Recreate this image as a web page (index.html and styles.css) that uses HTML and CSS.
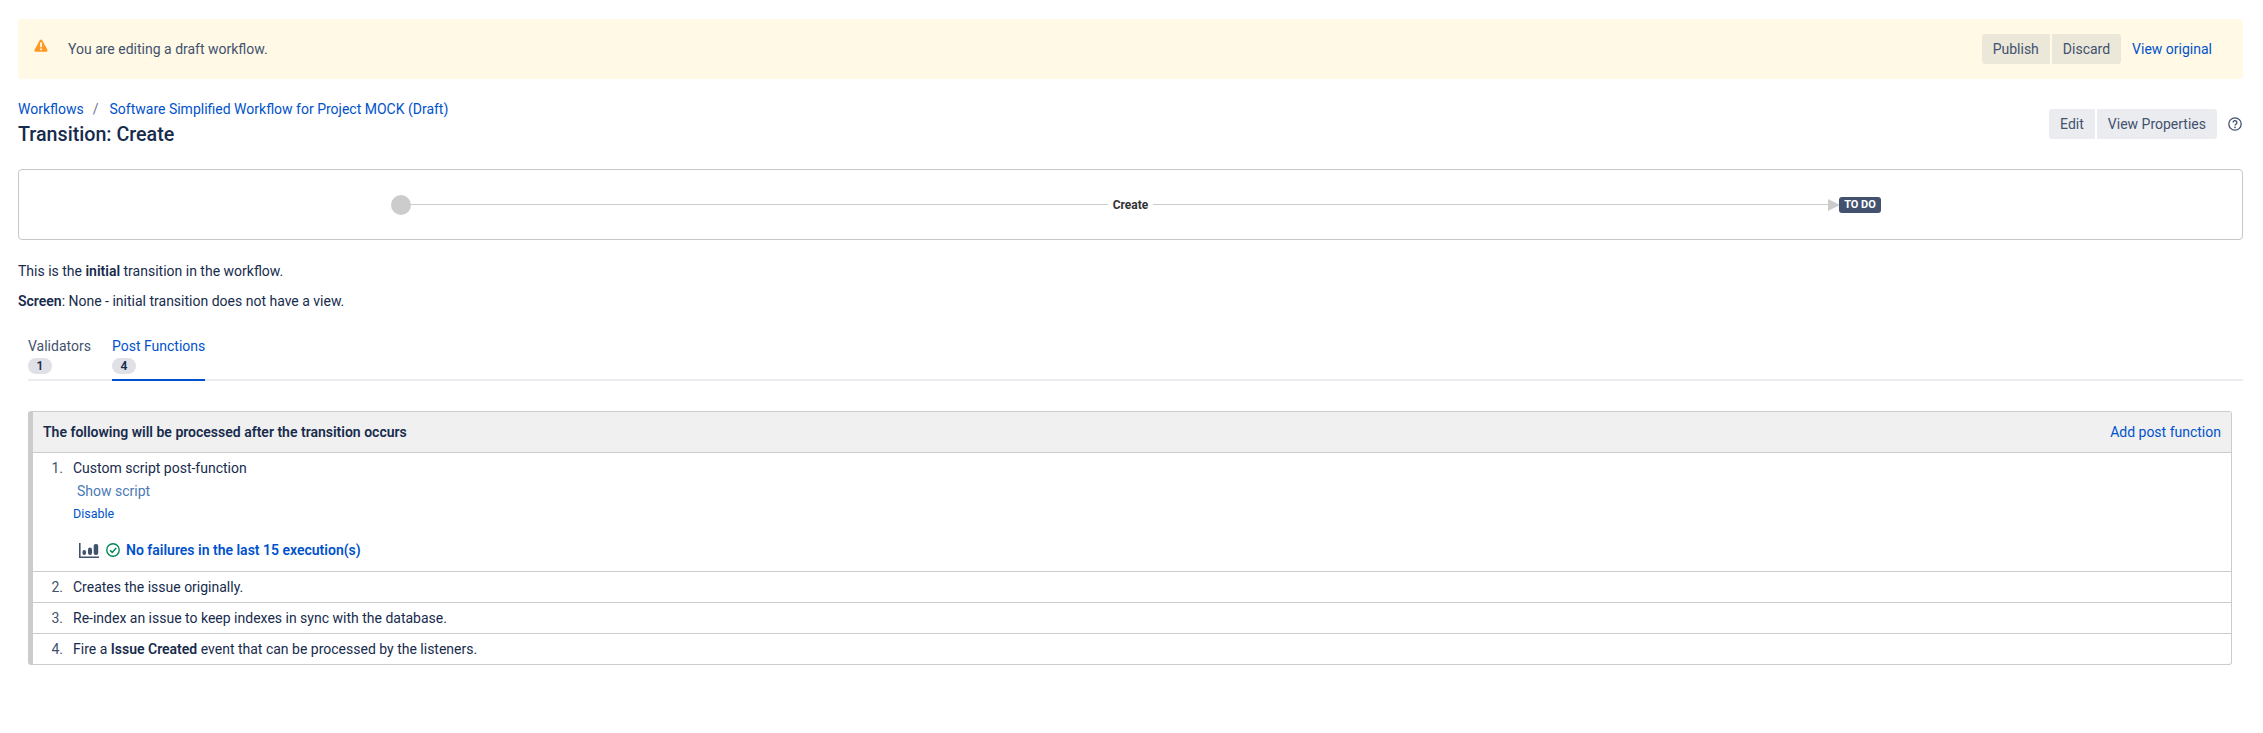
FILE: index.html
```html
<!DOCTYPE html>
<html lang="en">
<head>
<meta charset="utf-8">
<title>Transition: Create</title>
<link rel="stylesheet" href="styles.css">
</head>
<body>
<div class="banner">
  <svg class="warn-icon" width="14" height="13" viewBox="0 0 14 13"><path d="M5.9 1.1c.5-.9 1.700-.9 2.200 0l5.300 9.700c.5.9-.1 2-1.100 2H1.700c-1 0-1.600-1.100-1.100-2z" fill="#ff991f"/><rect x="6.100" y="3.300" width="1.800" height="5" rx=".9" fill="#fff"/><circle cx="7" cy="10.300" r="1" fill="#fff"/></svg>
  <span class="banner-text">You are editing a draft workflow.</span>
  <div class="btn-group banner-group">
    <a class="btn btn-warn">Publish</a>
    <a class="btn btn-warn">Discard</a>
  </div>
  <a class="link view-original">View original</a>
</div>

<div class="page-head">
  <div class="head-main">
    <div class="crumbs"><a class="link">Workflows</a><span class="sep">/</span><a class="link">Software Simplified Workflow for Project MOCK (Draft)</a></div>
    <h1 class="title">Transition: Create</h1>
  </div>
  <div class="btn-group head-group">
    <a class="btn">Edit</a>
    <a class="btn">View Properties</a>
  </div>
  <svg class="help-icon" width="14" height="14" viewBox="0 0 14 14"><circle cx="7" cy="7" r="6.200" fill="none" stroke="#42526e" stroke-width="1.300"/><path d="M5.100 5.500a1.900 1.900 0 1 1 2.900 1.600c-.7.400-1 .8-1 1.500" fill="none" stroke="#42526e" stroke-width="1.300"/><circle cx="7" cy="10.400" r=".8" fill="#42526e"/></svg>
</div>

<div class="diagram">
  <span class="node"></span>
  <span class="edge edge-a"></span>
  <span class="edge-label">Create</span>
  <span class="edge edge-b"></span>
  <span class="arrow"></span>
  <span class="status">TO DO</span>
</div>

<p class="info info-first">This is the <strong>initial</strong> transition in the workflow.</p>
<p class="info"><strong>Screen</strong>: None - initial transition does not have a view.</p>

<div class="tabs">
  <div class="tab"><span class="tab-name">Validators</span><span class="count">1</span></div>
  <div class="tab tab-active"><span class="tab-name">Post Functions</span><span class="count">4</span></div>
</div>

<div class="panel">
  <div class="panel-head">
    <strong>The following will be processed after the transition occurs</strong>
    <a class="link">Add post function</a>
  </div>
  <div class="row row-first">
    <span class="num">1.</span>
    <div class="row-body">
      <div>Custom script post-function</div>
      <a class="show-script">Show script</a>
      <a class="link disable">Disable</a>
      <div class="status-line">
        <svg class="chart-icon" width="20" height="15" viewBox="0 0 20 15"><path d="M.8 0v14.200H20" fill="none" stroke="#42526e" stroke-width="1.600"/><rect x="3.500" y="7" width="3.500" height="5" rx="1.700" fill="#42526e"/><rect x="9" y="4.500" width="4" height="7.500" rx="2" fill="#42526e"/><rect x="14.700" y="1" width="4.500" height="11" rx="2" fill="#42526e"/></svg>
        <svg class="check-icon" width="14" height="14" viewBox="0 0 14 14"><circle cx="7" cy="7" r="6.200" fill="none" stroke="#00875a" stroke-width="1.400"/><path d="M4 7.200l2.200 2.200L10.200 5" fill="none" stroke="#00875a" stroke-width="1.500"/></svg>
        <a class="link failures">No failures in the last 15 execution(s)</a>
      </div>
    </div>
  </div>
  <div class="row"><span class="num">2.</span><div class="row-body">Creates the issue originally.</div></div>
  <div class="row"><span class="num">3.</span><div class="row-body">Re-index an issue to keep indexes in sync with the database.</div></div>
  <div class="row"><span class="num">4.</span><div class="row-body">Fire a <strong>Issue Created</strong> event that can be processed by the listeners.</div></div>
</div>
</body>
</html>
```
FILE: styles.css
```css
* { box-sizing: border-box; }
html, body { margin: 0; background: #fff; }
body {
  padding: 19px 20px 0 18px;
  font-family: Roboto, "Noto Sans", sans-serif;
  font-size: 14px;
  line-height: 20px;
  color: #172b4d;
}
strong { font-weight: 600; }
.link { color: #0052cc; text-decoration: none; }

.banner {
  display: flex;
  align-items: center;
  height: 60px;
  padding: 0 31px 0 16px;
  background: #fff9e6;
  border-radius: 3px;
  color: #42526e;
}
.warn-icon { margin: -8px 20px 0 0; flex: none; }
.banner-text { flex: 1; }
.btn-group { display: flex; gap: 2px; }
.btn {
  display: block;
  height: 30px;
  line-height: 30px;
  padding: 0 11px;
  background: #ebecf0;
  color: #42526e;
  border-radius: 0;
}
.btn:first-child { border-radius: 3px 0 0 3px; }
.btn:last-child { border-radius: 0 3px 3px 0; }
.btn-warn { background: #ebe7d9; }
.view-original { margin-left: 11px; }

.page-head {
  display: flex;
  align-items: flex-start;
  height: 90px;
  padding-top: 20px;
}
.head-main { flex: 1; }
.crumbs { height: 20px; }
.sep { margin: 0 11px 0 9px; color: #6b778c; }
.title {
  margin: 4px 0 0;
  font-size: 19.700px;
  line-height: 24px;
  font-weight: 500;
}
.head-group { margin-top: 10px; }
.help-icon { margin: 18px 1px 0 11px; }

.diagram {
  display: flex;
  align-items: center;
  height: 71px;
  padding: 0 0 0 372px;
  border: 1px solid #c7c7c7;
  border-radius: 4px;
}
.node { width: 20px; height: 20px; border-radius: 50%; background: #ccc; flex: none; }
.edge { height: 1px; background: #ccc; flex: none; }
.edge-a { width: 697px; }
.edge-b { width: 675px; }
.edge-label {
  width: 45px;
  text-align: center;
  font-size: 12px;
  font-weight: 700;
  color: #333;
}
.arrow {
  width: 0;
  height: 0;
  border-left: 12px solid #ccc;
  border-top: 6px solid transparent;
  border-bottom: 6px solid transparent;
  flex: none;
}
.status {
  width: 42px;
  height: 16px;
  line-height: 15px;
  text-align: center;
  font-size: 11px;
  font-weight: 700;
  color: #fff;
  background: #42526e;
  border-radius: 3px;
  margin: 0 0 0 -1px;
}

.info { margin: 0 0 10px; }
.info-first { margin-top: 21px; }

.tabs {
  display: flex;
  gap: 21px;
  margin: 23px 0 0 10px;
  height: 47px;
  border-bottom: 2px solid #ebecf0;
}
.tab { display: flex; flex-direction: column; align-items: flex-start; height: 47px; color: #42526e; padding-top: 2px; }
.tab-name { height: 20px; line-height: 20px; }
.tab-active { border-bottom: 2px solid #0052cc; }
.tab-active .tab-name { color: #0052cc; }
.count {
  width: 24px;
  height: 16px;
  line-height: 16px;
  text-align: center;
  background: #dfe1e6;
  border-radius: 8px;
  font-size: 12px;
  font-weight: 600;
  color: #172b4d;
  margin-top: 2px;
}

.panel {
  margin: 30px 11px 0 10px;
  border: 1px solid #ccc;
  border-left: 5px solid #ccc;
  border-radius: 3px;
}
.panel-head {
  display: flex;
  justify-content: space-between;
  align-items: center;
  height: 40px;
  padding: 0 10px 0 10px;
  background: #f0f0f0;
}
.row {
  display: flex;
  padding: 5px 0 5px;
  min-height: 31px;
  border-top: 1px solid #ccc;
}
.num { width: 30px; text-align: right; flex: none; color: #42526e; }
.row-body { margin-left: 10px; }
.row-first { height: 119px; }
.show-script { display: block; margin: 3px 0 0 4px; color: #4a7ab5; height: 20px; }
.disable { display: block; margin-top: 3px; font-size: 12.500px; height: 20px; }
.status-line { display: flex; align-items: center; margin: 16px 0 0 6px; height: 20px; }
.check-icon { margin-left: 7px; }
.failures { margin-left: 6px; font-weight: 600; }
```
